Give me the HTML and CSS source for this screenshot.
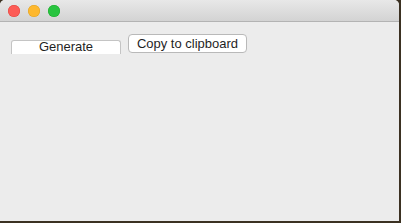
FILE: index.html
```html
<!DOCTYPE html>
<html lang="en">
<head>
    <meta charset="UTF-8">
    <title>Generate</title>
    <link rel="stylesheet" href="styles.css">
</head>
<body>
    <div class="window">
        <div class="titlebar">
            <span class="light red"></span>
            <span class="light yellow"></span>
            <span class="light green"></span>
        </div>
        <div class="content">
            <div class="tab">Generate</div>
            <button class="push-button">Copy to clipboard</button>
        </div>
    </div>
</body>
</html>
```

FILE: styles.css
```css
body {
    margin: 0;
    width: 401px;
    height: 223px;
    background: #3b3122;
    font-family: "Liberation Sans", Arial, sans-serif;
    overflow: hidden;
}

.window {
    width: 399px;
    height: 221px;
    background: #ececec;
    border-radius: 5px 5px 0 0;
    overflow: hidden;
}

.titlebar {
    height: 21px;
    border-bottom: 1px solid #b3b3b3;
    background: linear-gradient(#e8e8e8, #d3d3d3);
    display: flex;
    align-items: center;
    gap: 8px;
    padding-left: 8px;
}

.light {
    width: 12px;
    height: 12px;
    border-radius: 50%;
}

.red {
    background: #fd5c56;
    box-shadow: inset 0 0 0 0.5px #e0443e;
}

.yellow {
    background: #feb82e;
    box-shadow: inset 0 0 0 0.5px #dea123;
}

.green {
    background: #29c440;
    box-shadow: inset 0 0 0 0.5px #1aab29;
}

.content {
    display: flex;
    align-items: flex-start;
    gap: 7px;
    padding: 12px 0 0 11px;
}

.tab {
    box-sizing: border-box;
    width: 110px;
    height: 14px;
    margin-top: 6px;
    border: 1px solid #c4c4c4;
    border-bottom: none;
    border-radius: 3px 3px 0 0;
    background: #fff;
    font-size: 13px;
    line-height: 12px;
    text-align: center;
    color: #1f1f1f;
}

.push-button {
    box-sizing: border-box;
    width: 119px;
    height: 19px;
    padding: 0;
    border: 1px solid #b9b9b9;
    border-radius: 4px;
    background: #fff;
    font-family: inherit;
    font-size: 13px;
    line-height: 16px;
    color: #1f1f1f;
}
```
